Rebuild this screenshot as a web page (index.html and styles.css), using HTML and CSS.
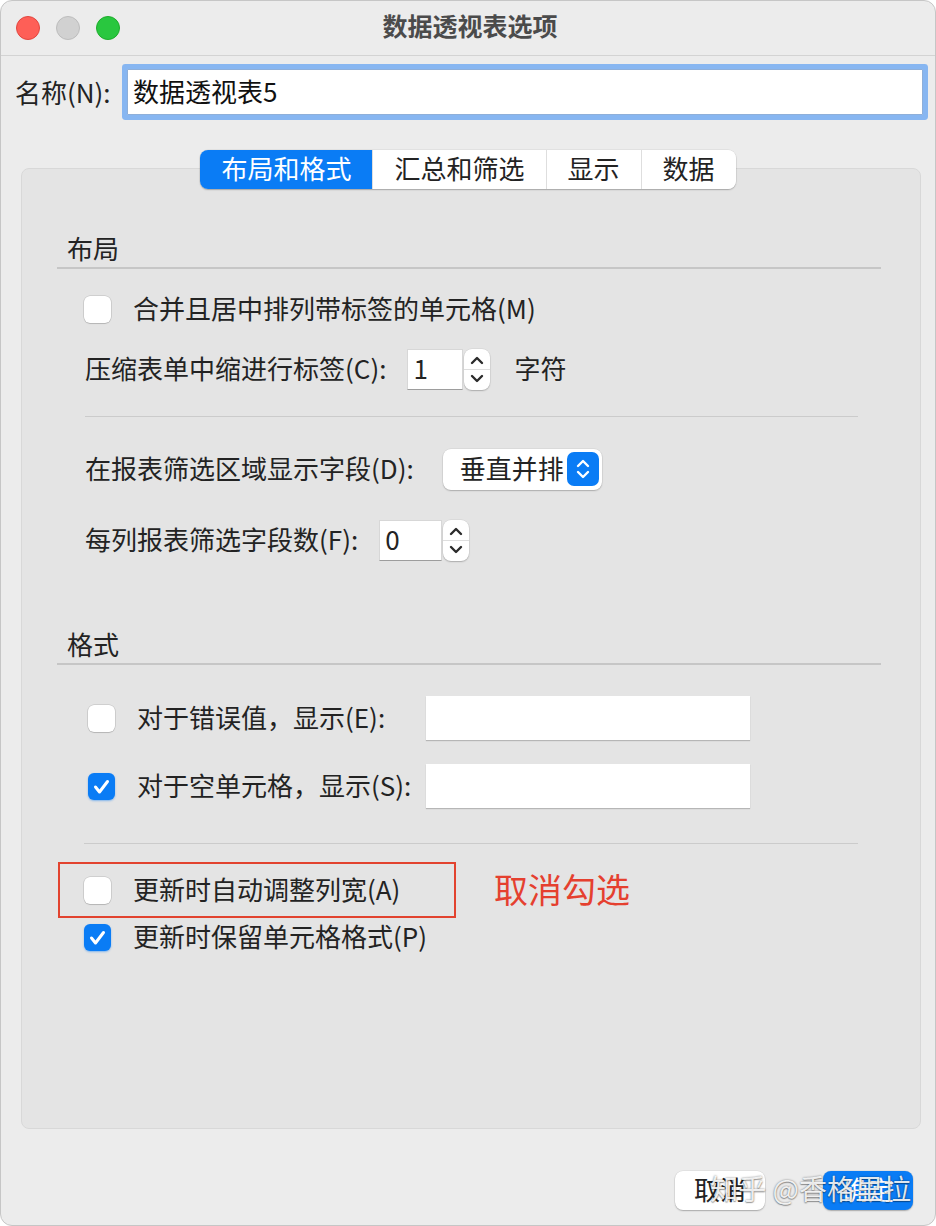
FILE: index.html
```html
<!DOCTYPE html>
<html lang="zh-CN">
<head>
    <meta charset="UTF-8">
    <meta name="viewport" content="width=device-width, initial-scale=1.0">
    <title>数据透视表选项</title>
    <link rel="stylesheet" href="styles.css">
</head>
<body>

<div class="window">
    <header class="titlebar">
        <div class="lights">
            <span class="light red"></span>
            <span class="light gray"></span>
            <span class="light green"></span>
        </div>
        <div class="title">数据透视表选项</div>
        <div></div>
    </header>

    <div class="name-row">
        <label class="name-label">名称(N):</label>
        <div class="name-field">数据透视表5</div>
    </div>

    <div class="tabs">
        <div class="tab active">布局和格式</div>
        <div class="tab">汇总和筛选</div>
        <div class="tab">显示</div>
        <div class="tab">数据</div>
    </div>

    <div class="panel">
        <div class="section-title">布局</div>

        <div class="row row-m">
            <span class="check"></span>
            <span>合并且居中排列带标签的单元格(M)</span>
        </div>

        <div class="row row-c">
            <span>压缩表单中缩进行标签(C):</span>
            <div class="number">1</div>
            <div class="stepper">
                <svg width="26" height="41" viewBox="0 0 26 41">
                    <path d="M8 14 L13 9 L18 14" fill="none" stroke="#2b2b2b" stroke-width="2.4" stroke-linecap="round" stroke-linejoin="round"/>
                    <line x1="0" y1="20.5" x2="26" y2="20.5" stroke="#dedede" stroke-width="1"/>
                    <path d="M8 27 L13 32 L18 27" fill="none" stroke="#2b2b2b" stroke-width="2.4" stroke-linecap="round" stroke-linejoin="round"/>
                </svg>
            </div>
            <span class="unit">字符</span>
        </div>

        <div class="divider"></div>

        <div class="row row-d">
            <span>在报表筛选区域显示字段(D):</span>
            <div class="popup">
                <span>垂直并排</span>
                <span class="popup-arrow">
                    <svg width="32" height="34" viewBox="0 0 32 34">
                        <path d="M11 14 L16 9 L21 14" fill="none" stroke="#fff" stroke-width="2.4" stroke-linecap="round" stroke-linejoin="round"/>
                        <path d="M11 20 L16 25 L21 20" fill="none" stroke="#fff" stroke-width="2.4" stroke-linecap="round" stroke-linejoin="round"/>
                    </svg>
                </span>
            </div>
        </div>

        <div class="row row-f">
            <span>每列报表筛选字段数(F):</span>
            <div class="number wide">0</div>
            <div class="stepper">
                <svg width="26" height="41" viewBox="0 0 26 41">
                    <path d="M8 14 L13 9 L18 14" fill="none" stroke="#2b2b2b" stroke-width="2.4" stroke-linecap="round" stroke-linejoin="round"/>
                    <line x1="0" y1="20.5" x2="26" y2="20.5" stroke="#dedede" stroke-width="1"/>
                    <path d="M8 27 L13 32 L18 27" fill="none" stroke="#2b2b2b" stroke-width="2.4" stroke-linecap="round" stroke-linejoin="round"/>
                </svg>
            </div>
        </div>

        <div class="section-title section-format">格式</div>

        <div class="row row-e">
            <span class="check"></span>
            <span class="field-label">对于错误值，显示(E):</span>
            <div class="text-field"></div>
        </div>

        <div class="row row-s">
            <span class="check checked">
                <svg width="27" height="27" viewBox="0 0 27 27">
                    <path d="M7.5 14 L11.5 19 L19.5 8.5" fill="none" stroke="#fff" stroke-width="3" stroke-linecap="round" stroke-linejoin="round"/>
                </svg>
            </span>
            <span class="field-label">对于空单元格，显示(S):</span>
            <div class="text-field"></div>
        </div>

        <div class="divider divider-lower"></div>

        <div class="marked">
            <div class="red-box">
                <span class="check"></span>
                <span>更新时自动调整列宽(A)</span>
            </div>
            <span class="note">取消勾选</span>
        </div>

        <div class="row row-p">
            <span class="check checked">
                <svg width="27" height="27" viewBox="0 0 27 27">
                    <path d="M7.5 14 L11.5 19 L19.5 8.5" fill="none" stroke="#fff" stroke-width="3" stroke-linecap="round" stroke-linejoin="round"/>
                </svg>
            </span>
            <span>更新时保留单元格格式(P)</span>
        </div>
    </div>

    <footer class="buttons">
        <div class="btn">取消</div>
        <div class="btn primary">确定</div>
    </footer>

    <div class="watermark">知乎 @香格里拉</div>
</div>

</body>
</html>
```

FILE: styles.css
```css
body {
    margin: 0;
    background-color: #ffffff;
    font-family: "Noto Sans CJK SC", sans-serif;
    font-size: 26px;
    color: #232323;
}
.window {
    position: relative;
    width: 936px;
    height: 1226px;
    box-sizing: border-box;
    background-color: #ececec;
    border: 1px solid #c6c6c6;
    border-radius: 12px;
    overflow: hidden;
}
.titlebar {
    display: grid;
    grid-template-columns: 1fr auto 1fr;
    align-items: center;
    height: 54px;
    border-bottom: 1px solid #d3d3d3;
}
.lights {
    display: flex;
    gap: 16px;
    padding-left: 15px;
}
.light {
    width: 24px;
    height: 24px;
    box-sizing: border-box;
    border-radius: 50%;
}
.red {
    background-color: #fe5f57;
    border: 1px solid #e2463f;
}
.gray {
    background-color: #d1d1d1;
    border: 1px solid #bdbdbd;
}
.green {
    background-color: #29c73f;
    border: 1px solid #1dad2b;
}
.title {
    font-size: 25px;
    font-weight: bold;
    color: #4b4b4b;
    padding: 0 0 6px 4px;
}
.name-row {
    display: flex;
    align-items: center;
    height: 46px;
    margin: 13px 0 0 14px;
}
.name-label {
    width: 112px;
    padding-bottom: 2px;
}
.name-field {
    width: 796px;
    height: 46px;
    box-sizing: border-box;
    background-color: #fff;
    border: 1px solid #8eafd9;
    border-radius: 1px;
    box-shadow: 0 0 0 5px #87b6f1;
    padding-left: 5px;
    line-height: 42px;
    color: #111;
}
.tabs {
    position: relative;
    z-index: 1;
    display: flex;
    width: max-content;
    margin: 35px auto -21px;
    border-radius: 8px;
    box-shadow: 0 1px 1.5px rgba(0, 0, 0, 0.25), 0 0 0 0.5px rgba(0, 0, 0, 0.08);
}
.tab {
    height: 39px;
    line-height: 36px;
    padding: 0 21px;
    background-color: #fff;
    border-left: 1px solid #dedede;
}
.tab:first-child {
    border-left: none;
    border-radius: 8px 0 0 8px;
}
.tab:last-child {
    border-radius: 0 8px 8px 0;
}
.tab.active {
    background-color: #0a7cf5;
    color: #fff;
}
.panel {
    height: 961px;
    box-sizing: border-box;
    margin: 0 14px 0 20px;
    padding: 62px 39px 0 35px;
    background-color: #e4e4e4;
    border: 1px solid #d8d8d8;
    border-radius: 8px;
}
.section-title {
    height: 36px;
    line-height: 33px;
    padding-left: 10px;
    border-bottom: 2px solid #c6c6c6;
}
.section-format {
    margin-top: 63px;
}
.row {
    display: flex;
    align-items: center;
    height: 48px;
    margin-left: 27px;
    padding-bottom: 3px;
    box-sizing: border-box;
}
.row-m {
    margin-top: 16px;
}
.row-c {
    margin-top: 12px;
    margin-left: 28px;
}
.row-d {
    margin-top: 28px;
    margin-left: 28px;
}
.row-f {
    margin-top: 23px;
    margin-left: 28px;
}
.row-e {
    margin-top: 29px;
    margin-left: 31px;
}
.row-s {
    margin-top: 20px;
    margin-left: 31px;
}
.row-p {
    margin-top: -5px;
}
.check {
    flex: none;
    width: 27px;
    height: 27px;
    margin: 3px 22px 0 0;
    border-radius: 6px;
    background-color: #fff;
    box-shadow: 0 0 0 0.5px rgba(0, 0, 0, 0.18), 0 1px 1px rgba(0, 0, 0, 0.12);
}
.check.checked {
    background-color: #0a7cf5;
    box-shadow: 0 1px 2px rgba(10, 124, 245, 0.45);
}
.check svg {
    display: block;
}
.number {
    width: 56px;
    height: 41px;
    box-sizing: border-box;
    margin: 3px 0 0 21px;
    padding-left: 5px;
    line-height: 36px;
    background-color: #fff;
    border: 1px solid #d7d7d7;
    border-bottom-color: #9d9d9d;
}
.number.wide {
    width: 63px;
}
.stepper {
    width: 26px;
    height: 41px;
    margin: 3px 0 0 1px;
    border-radius: 8px;
    background-color: #fff;
    box-shadow: 0 1px 1.5px rgba(0, 0, 0, 0.22), 0 0 0 0.5px rgba(0, 0, 0, 0.08);
}
.stepper svg {
    display: block;
}
.unit {
    margin-left: 24px;
}
.divider {
    border-top: 1px solid #cbcbcb;
    margin: 23px 23px 0 28px;
}
.divider-lower {
    margin-top: 33px;
    margin-left: 27px;
}
.popup {
    display: flex;
    align-items: center;
    justify-content: space-between;
    width: 159px;
    height: 41px;
    box-sizing: border-box;
    margin: 3px 0 0 29px;
    padding: 0 3px 0 17px;
    border-radius: 8px;
    background-color: #fff;
    box-shadow: 0 1px 1.5px rgba(0, 0, 0, 0.22), 0 0 0 0.5px rgba(0, 0, 0, 0.08);
}
.popup > span:first-child {
    padding-bottom: 3px;
}
.popup-arrow {
    width: 32px;
    height: 34px;
    border-radius: 7px;
    background-color: #0a7cf5;
}
.popup-arrow svg {
    display: block;
}
.field-label {
    width: 289px;
    flex: none;
}
.text-field {
    width: 324px;
    height: 44px;
    margin-top: 3px;
    background-color: #fff;
    box-shadow: 0 1px 1px rgba(0, 0, 0, 0.2);
}
.marked {
    display: flex;
    align-items: center;
    margin: 18px 0 0 1px;
}
.red-box {
    display: flex;
    align-items: center;
    width: 398px;
    height: 56px;
    box-sizing: border-box;
    padding: 0 0 3px 24px;
    border: 2px solid #e2432f;
}
.note {
    margin-left: 38px;
    padding-bottom: 4px;
    font-size: 34px;
    color: #e5402f;
}
.buttons {
    display: flex;
    justify-content: flex-end;
    gap: 58px;
    margin: 42px 22px 0 0;
}
.btn {
    width: 90px;
    height: 39px;
    line-height: 36px;
    text-align: center;
    border-radius: 8px;
    background-color: #fff;
    box-shadow: 0 1px 1.5px rgba(0, 0, 0, 0.25), 0 0 0 0.5px rgba(0, 0, 0, 0.08);
}
.btn.primary {
    background-color: #0a7cf5;
    color: #fff;
}
.watermark {
    position: absolute;
    top: 1167px;
    right: 24px;
    font-size: 28px;
    line-height: 40px;
    color: rgba(255, 255, 255, 0.88);
    text-shadow: 0 0 2px rgba(0, 0, 0, 0.5), 0 1px 1px rgba(0, 0, 0, 0.3);
}
```
